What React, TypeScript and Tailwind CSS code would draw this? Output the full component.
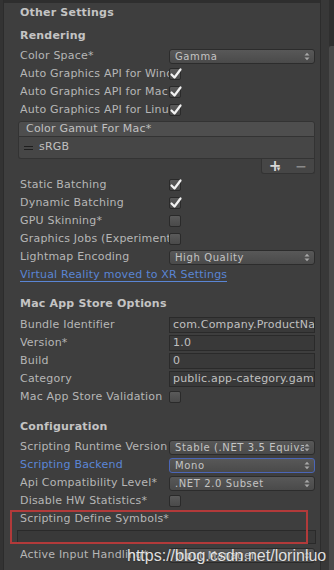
import React from "react";

const font = { fontFamily: '"DejaVu Sans", Verdana, sans-serif' };

function Arrows() {
  return (
    <svg width="6" height="9" viewBox="0 0 6 9" className="shrink-0">
      <path d="M0.5 3.5 L3 0.8 L5.5 3.5 Z" fill="#a8a8a8" />
      <path d="M0.5 5.5 L3 8.2 L5.5 5.5 Z" fill="#a8a8a8" />
    </svg>
  );
}

function Check({ on }: { on?: boolean }) {
  return (
    <div className="relative w-[12px] h-[12px] rounded-[2px] border border-[#2a2a2a] bg-[linear-gradient(#5a5a5a,#4a4a4a)]">
      {on && (
        <svg width="14" height="14" viewBox="0 0 14 14" className="absolute left-[-1px] top-[-2px]">
          <path d="M2.5 7.5 L5.5 10.5 L11.5 2.5" stroke="#f2f2f2" strokeWidth="2.2" fill="none" strokeLinecap="round" strokeLinejoin="round" />
        </svg>
      )}
    </div>
  );
}

function Row({ label, children, blue }: { label: string; children?: React.ReactNode; blue?: boolean }) {
  return (
    <div className="flex items-center h-[18px] pl-[16px]">
      <div className={`w-[149px] shrink-0 overflow-hidden whitespace-nowrap ${blue ? "text-[#5b86d6]" : ""}`}>{label}</div>
      <div className="flex-1 flex items-center">{children}</div>
    </div>
  );
}

function Drop({ value, focus }: { value: string; focus?: boolean }) {
  return (
    <div
      className={`flex items-center w-[146px] h-[15px] rounded-[3px] pl-[5px] pr-[4px] text-[10px] text-[#c4c4c4] bg-[linear-gradient(#585858,#4a4a4a)] ${
        focus ? "border border-[#4b66b8]" : "border border-[#2c2c2c]"
      }`}
    >
      <span className="flex-1 overflow-hidden whitespace-nowrap tracking-[0.6px]">{value}</span>
      <Arrows />
    </div>
  );
}

function Field({ value }: { value: string }) {
  return (
    <div className="flex items-center w-[146px] h-[16px] px-[3px] bg-[#393939] border border-[#2a2a2a] text-[#c0c0c0] overflow-hidden whitespace-nowrap">
      {value}
    </div>
  );
}

function Header({ children, className = "" }: { children: React.ReactNode; className?: string }) {
  return <div className={`h-[18px] flex items-center pl-[16px] font-bold text-[#c4c4c4] ${className}`}>{children}</div>;
}

export default function App() {
  return (
    <div style={font} className="relative w-[334px] h-[570px] overflow-hidden bg-[#3e3e3e] text-[11px] tracking-[0.2px] text-[#b6b6b6] flex">
      <div className="w-[4px] bg-[#333333] border-r border-[#2c2c2c]" />
      <div className="flex-1 flex flex-col border-t-[3px] border-[#2e2e2e]">
        <Header className="mt-[1px]">Other Settings</Header>
        <Header className="mt-[5px]">Rendering</Header>
        <div className="h-[2px]" />
        <Row label="Color Space*">
          <Drop value="Gamma" />
        </Row>
        <Row label="Auto Graphics API for Windows">
          <Check on />
        </Row>
        <Row label="Auto Graphics API for Mac">
          <Check on />
        </Row>
        <Row label="Auto Graphics API for Linux">
          <Check on />
        </Row>

        <div className="ml-[14px] mr-[5px] mt-[2px] flex flex-col">
          <div className="h-[16px] flex items-center pl-[7px] rounded-t-[3px] bg-[#4e4e4e] text-[#c0c0c0] border border-[#333]">
            Color Gamut For Mac*
          </div>
          <div className="h-[22px] flex items-center bg-[#464646] border-x border-b border-[#333] rounded-bl-[3px]">
            <div className="ml-[5px] w-[9px] flex flex-col gap-[2px]">
              <div className="h-[1px] bg-[#1e1e1e]" />
              <div className="h-[1px] bg-[#1e1e1e]" />
            </div>
            <span className="ml-[6px] text-[#c0c0c0]">sRGB</span>
          </div>
          <div className="flex justify-end">
            <div className="w-[54px] h-[15px] flex items-center justify-around bg-[#464646] border-x border-b border-[#333] rounded-b-[3px] text-[#d8d8d8] font-bold">
              <span className="relative text-[15px] leading-none">
                +<span className="absolute text-[7px] left-[8px] top-[7px]">▾</span>
              </span>
              <span className="text-[14px] leading-none text-[#8a8a8a]">−</span>
            </div>
          </div>
        </div>

        <div className="h-[2px]" />
        <Row label="Static Batching">
          <Check on />
        </Row>
        <Row label="Dynamic Batching">
          <Check on />
        </Row>
        <Row label="GPU Skinning*">
          <Check />
        </Row>
        <Row label="Graphics Jobs (Experimental)">
          <Check />
        </Row>
        <Row label="Lightmap Encoding">
          <Drop value="High Quality" />
        </Row>
        <div className="h-[18px] flex items-center pl-[16px]">
          <span className="text-[#5a85d4] border-b border-[#5a85d4] leading-[13px]">Virtual Reality moved to XR Settings</span>
        </div>

        <Header className="mt-[11px]">Mac App Store Options</Header>
        <div className="h-[3px]" />
        <Row label="Bundle Identifier">
          <Field value="com.Company.ProductName" />
        </Row>
        <Row label="Version*">
          <Field value="1.0" />
        </Row>
        <Row label="Build">
          <Field value="0" />
        </Row>
        <Row label="Category">
          <Field value="public.app-category.games" />
        </Row>
        <Row label="Mac App Store Validation">
          <Check />
        </Row>

        <Header className="mt-[12px]">Configuration</Header>
        <div className="h-[2px]" />
        <Row label="Scripting Runtime Version">
          <Drop value="Stable (.NET 3.5 Equivalent)" />
        </Row>
        <Row label="Scripting Backend" blue>
          <Drop value="Mono" focus />
        </Row>
        <Row label="Api Compatibility Level*">
          <Drop value=".NET 2.0 Subset" />
        </Row>
        <Row label="Disable HW Statistics*">
          <Check />
        </Row>
        <div className="h-[18px] flex items-center pl-[16px]">Scripting Define Symbols*</div>
        <div className="ml-[13px] mr-[4px] mt-[2px] h-[14px] bg-[#393939] border border-[#2a2a2a]" />
        <div className="h-[2px]" />
        <Row label="Active Input Handling*">
          <Drop value="Input Manager" />
        </Row>
      </div>
      <div className="w-[9px] border-l border-[#2c2c2c] bg-[#383838]" />
      <div className="w-[5px] flex flex-col bg-[#2f2f2f]">
        <div className="h-[46px]" />
        <div className="flex-1 bg-[#4a4a4a] rounded-tl-[2px]" />
      </div>

      <div className="absolute left-[10px] top-[510px] w-[298px] h-[34px] border-2 border-[#b23a3a] pointer-events-none" />
      <div
        className="absolute left-[127px] top-[544px] text-[16px] tracking-normal text-white/85 whitespace-nowrap pointer-events-none"
        style={{ fontFamily: '"Liberation Sans", Arial, sans-serif', textShadow: "0 0 2px rgba(0,0,0,0.5)" }}
      >
        https://blog.csdn.net/lorinluo
      </div>
    </div>
  );
}
